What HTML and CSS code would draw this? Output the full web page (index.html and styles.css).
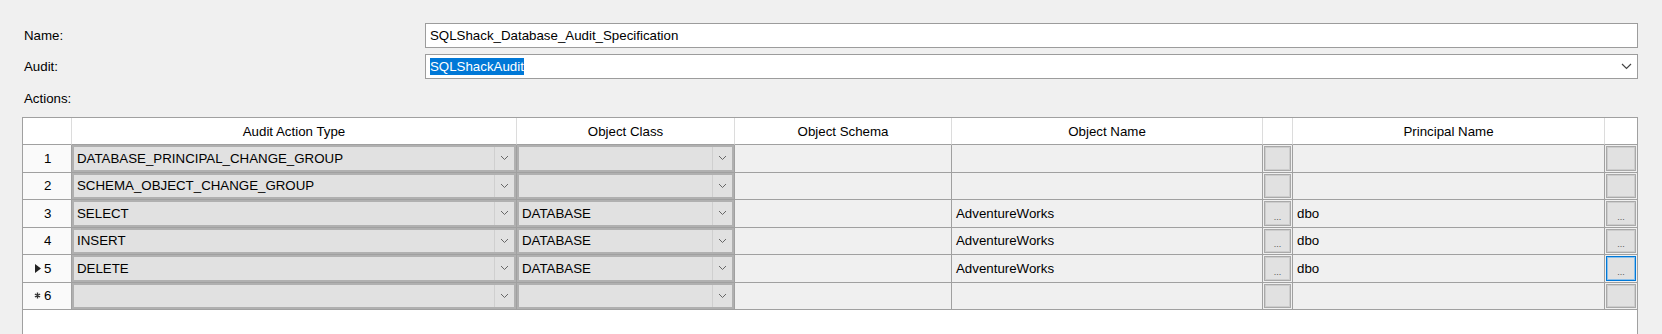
FILE: index.html
```html
<!DOCTYPE html>
<html lang="en">
<head>
  <meta charset="UTF-8">
  <title>Database Audit Specification</title>
  <link rel="stylesheet" href="styles.css">
</head>
<body>
  <div class="dialog">
    <div class="field">
      <label>Name:</label>
      <div class="textbox">SQLShack_Database_Audit_Specification</div>
    </div>
    <div class="field">
      <label>Audit:</label>
      <div class="textbox">
        <span class="sel">SQLShackAudit</span>
        <svg class="caret" width="11" height="7" viewBox="0 0 11 7"><path d="M1 1l4.5 4.5L10 1" fill="none" stroke="#444" stroke-width="1.2"/></svg>
      </div>
    </div>
    <div class="caption">Actions:</div>

    <div class="grid">
      <div class="row head">
        <div class="cell"></div>
        <div class="cell">Audit Action Type</div>
        <div class="cell">Object Class</div>
        <div class="cell">Object Schema</div>
        <div class="cell">Object Name</div>
        <div class="cell"></div>
        <div class="cell">Principal Name</div>
        <div class="cell"></div>
      </div>

      <div class="row">
        <div class="cell num"><span class="ind"></span>1</div>
        <div class="cell dd"><div class="dd-box"><span class="dd-text">DATABASE_PRINCIPAL_CHANGE_GROUP</span><span class="dd-btn"><svg width="9" height="6" viewBox="0 0 9 6"><path d="M1 1l3.5 3.5L8 1" fill="none" stroke="#666" stroke-width="1"/></svg></span></div></div>
        <div class="cell dd"><div class="dd-box"><span class="dd-text"></span><span class="dd-btn"><svg width="9" height="6" viewBox="0 0 9 6"><path d="M1 1l3.5 3.5L8 1" fill="none" stroke="#666" stroke-width="1"/></svg></span></div></div>
        <div class="cell"></div>
        <div class="cell"></div>
        <div class="cell btn"><div class="btn-box"></div></div>
        <div class="cell"></div>
        <div class="cell btn"><div class="btn-box"></div></div>
      </div>

      <div class="row">
        <div class="cell num"><span class="ind"></span>2</div>
        <div class="cell dd"><div class="dd-box"><span class="dd-text">SCHEMA_OBJECT_CHANGE_GROUP</span><span class="dd-btn"><svg width="9" height="6" viewBox="0 0 9 6"><path d="M1 1l3.5 3.5L8 1" fill="none" stroke="#666" stroke-width="1"/></svg></span></div></div>
        <div class="cell dd"><div class="dd-box"><span class="dd-text"></span><span class="dd-btn"><svg width="9" height="6" viewBox="0 0 9 6"><path d="M1 1l3.5 3.5L8 1" fill="none" stroke="#666" stroke-width="1"/></svg></span></div></div>
        <div class="cell"></div>
        <div class="cell"></div>
        <div class="cell btn"><div class="btn-box"></div></div>
        <div class="cell"></div>
        <div class="cell btn"><div class="btn-box"></div></div>
      </div>

      <div class="row">
        <div class="cell num"><span class="ind"></span>3</div>
        <div class="cell dd"><div class="dd-box"><span class="dd-text">SELECT</span><span class="dd-btn"><svg width="9" height="6" viewBox="0 0 9 6"><path d="M1 1l3.5 3.5L8 1" fill="none" stroke="#666" stroke-width="1"/></svg></span></div></div>
        <div class="cell dd"><div class="dd-box"><span class="dd-text">DATABASE</span><span class="dd-btn"><svg width="9" height="6" viewBox="0 0 9 6"><path d="M1 1l3.5 3.5L8 1" fill="none" stroke="#666" stroke-width="1"/></svg></span></div></div>
        <div class="cell"></div>
        <div class="cell">AdventureWorks</div>
        <div class="cell btn"><div class="btn-box">...</div></div>
        <div class="cell">dbo</div>
        <div class="cell btn"><div class="btn-box">...</div></div>
      </div>

      <div class="row">
        <div class="cell num"><span class="ind"></span>4</div>
        <div class="cell dd"><div class="dd-box"><span class="dd-text">INSERT</span><span class="dd-btn"><svg width="9" height="6" viewBox="0 0 9 6"><path d="M1 1l3.5 3.5L8 1" fill="none" stroke="#666" stroke-width="1"/></svg></span></div></div>
        <div class="cell dd"><div class="dd-box"><span class="dd-text">DATABASE</span><span class="dd-btn"><svg width="9" height="6" viewBox="0 0 9 6"><path d="M1 1l3.5 3.5L8 1" fill="none" stroke="#666" stroke-width="1"/></svg></span></div></div>
        <div class="cell"></div>
        <div class="cell">AdventureWorks</div>
        <div class="cell btn"><div class="btn-box">...</div></div>
        <div class="cell">dbo</div>
        <div class="cell btn"><div class="btn-box">...</div></div>
      </div>

      <div class="row">
        <div class="cell num"><span class="ind"><svg width="6" height="9" viewBox="0 0 6 9"><path d="M0 0l6 4.5L0 9z" fill="#222"/></svg></span>5</div>
        <div class="cell dd"><div class="dd-box"><span class="dd-text">DELETE</span><span class="dd-btn"><svg width="9" height="6" viewBox="0 0 9 6"><path d="M1 1l3.5 3.5L8 1" fill="none" stroke="#666" stroke-width="1"/></svg></span></div></div>
        <div class="cell dd"><div class="dd-box"><span class="dd-text">DATABASE</span><span class="dd-btn"><svg width="9" height="6" viewBox="0 0 9 6"><path d="M1 1l3.5 3.5L8 1" fill="none" stroke="#666" stroke-width="1"/></svg></span></div></div>
        <div class="cell"></div>
        <div class="cell">AdventureWorks</div>
        <div class="cell btn"><div class="btn-box">...</div></div>
        <div class="cell">dbo</div>
        <div class="cell btn"><div class="btn-box focus">...</div></div>
      </div>

      <div class="row">
        <div class="cell num"><span class="ind"><svg width="7" height="7" viewBox="0 0 7 7"><path d="M3.5 0.5v6M0.9 2l5.2 3M0.9 5l5.2-3" stroke="#333" stroke-width="1.4"/></svg></span>6</div>
        <div class="cell dd"><div class="dd-box"><span class="dd-text"></span><span class="dd-btn"><svg width="9" height="6" viewBox="0 0 9 6"><path d="M1 1l3.5 3.5L8 1" fill="none" stroke="#666" stroke-width="1"/></svg></span></div></div>
        <div class="cell dd"><div class="dd-box"><span class="dd-text"></span><span class="dd-btn"><svg width="9" height="6" viewBox="0 0 9 6"><path d="M1 1l3.5 3.5L8 1" fill="none" stroke="#666" stroke-width="1"/></svg></span></div></div>
        <div class="cell"></div>
        <div class="cell"></div>
        <div class="cell btn"><div class="btn-box"></div></div>
        <div class="cell"></div>
        <div class="cell btn"><div class="btn-box"></div></div>
      </div>
    </div>
  </div>
</body>
</html>
```

FILE: styles.css
```css
html, body {
  margin: 0;
  height: 100%;
  overflow: hidden;
}

body {
  background-color: #f0f0f0;
  font-family: "Liberation Sans", Arial, sans-serif;
  font-size: 13.3px;
  color: #000;
}

.dialog {
  padding: 23px 24px 0 22px;
}

.field {
  display: grid;
  grid-template-columns: 403px 1fr;
  align-items: center;
  height: 25px;
  margin-bottom: 6px;
}

.field label {
  padding-left: 2px;
}

.textbox {
  display: flex;
  align-items: center;
  height: 25px;
  box-sizing: border-box;
  padding-left: 4px;
  border: 1px solid #9c9c9c;
  background-color: #fff;
}

.sel {
  background-color: #0078d7;
  color: #fff;
  line-height: 17px;
}

.caret {
  margin-left: auto;
  margin-right: 5px;
}

.caption {
  margin-top: 11px;
  margin-bottom: 9px;
  padding-left: 2px;
  line-height: 18px;
}

/* data grid */
.grid {
  height: 217px;
  box-sizing: border-box;
  border: 1px solid #a0a0a0;
  border-bottom: none;
  background-color: #fff;
}

.row {
  display: grid;
  grid-template-columns: 49px 445px 218px 217px 311px 30px 312px 32px;
  height: 27.5px;
}

.row.head {
  height: 27px;
}

.cell {
  display: flex;
  align-items: center;
  box-sizing: border-box;
  padding-left: 4px;
  border-right: 1px solid #a0a0a0;
  border-bottom: 1px solid #a0a0a0;
  background-color: #f0f0f0;
  white-space: nowrap;
  overflow: hidden;
}

.cell:last-child {
  border-right: none;
}

.head .cell {
  justify-content: center;
  padding-left: 0;
  background-color: #fff;
  border-right-color: #dcdcdc;
}

.cell.num {
  padding-left: 0;
  background-color: #fafafa;
}

.ind {
  display: flex;
  align-items: center;
  justify-content: flex-end;
  width: 21px;
  padding-right: 3px;
  box-sizing: border-box;
}

.cell.dd {
  padding: 0;
}

.dd-box {
  display: flex;
  width: 100%;
  height: 100%;
  box-sizing: border-box;
  border: 2px solid #b0b0b0;
  background-color: #e1e1e1;
}

.dd-text {
  flex: 1;
  display: flex;
  align-items: center;
  padding-left: 3px;
}

.dd-btn {
  display: flex;
  align-items: center;
  justify-content: center;
  width: 19px;
  border-left: 1px solid #cfcfcf;
}

.cell.btn {
  padding: 1px;
}

.btn-box {
  display: flex;
  align-items: flex-end;
  justify-content: center;
  width: 100%;
  height: 100%;
  box-sizing: border-box;
  padding-bottom: 3px;
  border: 1px solid #a9a9a9;
  box-shadow: inset 0 0 0 1px #cdcdcd;
  background-color: #e1e1e1;
  font-size: 9px;
  line-height: 9px;
  color: #555;
}

.btn-box.focus {
  border-color: #0078d7;
  box-shadow: inset 0 0 0 1px #8cc0ea;
}
```
